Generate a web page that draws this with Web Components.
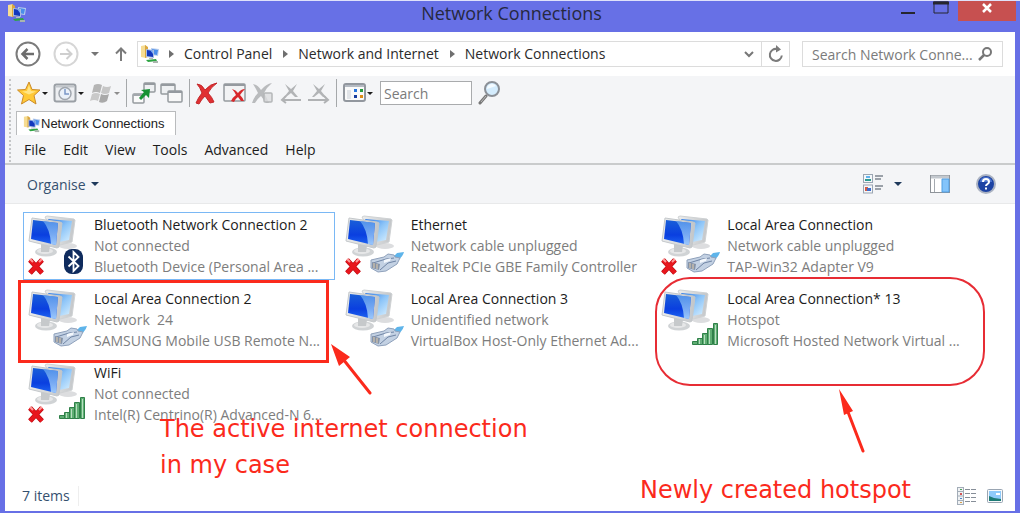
<!DOCTYPE html>
<html lang="en">
<head>
<meta charset="utf-8">
<title>Network Connections</title>
<style>
  html, body { margin: 0; }
  body { font-family: "Open Sans", "Noto Sans", sans-serif; font-size: 14px; color: #1c1c1c; background: #6770e6; }
</style>
</head>
<body>
<explorer-window></explorer-window>
<script>
const svg = (w, h, body, vb) => `<svg width="${w}" height="${h}" viewBox="${vb || `0 0 ${w} ${h}`}" aria-hidden="true">${body}</svg>`;

const ICON = {
  net: svg(20, 20, `
    <path d="M1 2l5-1v13l-5-1z" fill="#f6dc92"/><path d="M5 1l3 2v10l-3 1z" fill="#d9a63f"/>
    <path d="M11 4l8 1-1 7-7-1z" fill="#b9cdec"/><path d="M12 5l6 1-1 5-5-1z" fill="#4a8eea"/>
    <path d="M6 5l8 1v8l-8-1z" fill="#a9bde0"/><path d="M7 6l6 1v6l-6-1z" fill="#1238bd"/><path d="M10 6l3 1v3z" fill="#7eb0f5"/>
    <path d="M9 14h4v1H9z" fill="#b5bac0"/><path d="M6 16l10-1 1 2-9 1z" fill="#2fa544"/><path d="M13 17h5v2h-5z" fill="#a9b5ad"/>`),
  back: svg(26, 26, `<circle cx="13" cy="13" r="11.500" fill="none" stroke="#7b7b7b" stroke-width="2"/><path d="M19 13H8M12.500 8l-5 5 5 5" fill="none" stroke="#6d6d6d" stroke-width="2.500"/>`),
  forward: svg(26, 26, `<circle cx="13" cy="13" r="11.500" fill="none" stroke="#d6d6d6" stroke-width="2"/><path d="M7 13h11M13.500 8l5 5-5 5" fill="none" stroke="#cfcfcf" stroke-width="2"/>`),
  caret: svg(8, 8, `<path d="M0 2h8L4 6z" fill="currentColor"/>`),
  smallCaret: svg(8, 24, `<path d="M1 11h6l-3 3z" fill="currentColor"/>`),
  up: svg(20, 20, `<path d="M10 17V5M5 9.500l5-5 5 5" fill="none" stroke="#7b7b7b" stroke-width="2"/>`),
  right: svg(8, 12, `<path d="M2 2l5 4-5 4z" fill="#6f6f6f"/>`),
  chevron: svg(12, 12, `<path d="M2 4l4 4 4-4" fill="none" stroke="#777" stroke-width="2"/>`),
  refresh: svg(18, 18, `<path d="M14.800 10.500A6 6 0 1 1 10 4" fill="none" stroke="#7b7b7b" stroke-width="2"/><path d="M9 0l5 4.500-5 3z" fill="#7b7b7b"/>`),
  find: svg(16, 16, `<circle cx="10" cy="6" r="4" fill="none" stroke="#777" stroke-width="2"/><path d="M7 9l-5 5" stroke="#777" stroke-width="2.500"/>`),
  star: svg(24, 24, `<path d="M12 1l3 7.500 8 .5-6 5.500 2 8.500-7-4.500L4.500 23l2-8.500L.5 9l8-.5z" fill="#ffc936" stroke="#cc8b28" stroke-linejoin="round"/><path d="M12 4l2 6 5 .5-7 3-7-3 5-.5z" fill="#ffe586"/>`),
  clock: svg(24, 24, `<rect x="1.500" y="3.500" width="21" height="17" rx="2" fill="#eceef1" stroke="#9a9fa5" stroke-width="2"/><path d="M3 5.500h18" stroke="#c2c6cb" stroke-width="2"/><circle cx="12" cy="12.500" r="6" fill="#eaf1fa" stroke="#a0a6ae" stroke-width="1.500"/><path d="M12 8v5h4" fill="none" stroke="#7a97c8" stroke-width="1.500"/>`),
  flag: svg(24, 24, `<path d="M5 4q4-2 8 0l-2 8q-4-2-8 0z" fill="#b5b5b5"/><path d="M14 5q4 2 8 0l-2 7q-4 2-8 0z" fill="#c6c6c6"/><path d="M3 13q4-2 8 0l-2 7q-4-2-8 0z" fill="#c9c9c9"/><path d="M12 13q4 2 8 0l-2 7q-4 3-8 1z" fill="#a9a9a9"/>`),
  openWin: svg(24, 24, `<rect x="12" y="2" width="11" height="9" rx="1" fill="#eef0f2" stroke="#959a9f" stroke-width="1.500"/><path d="M12 3h11" stroke="#959a9f" stroke-width="2"/><rect x="1" y="13" width="11" height="9" rx="1" fill="#fafafa" stroke="#959a9f" stroke-width="1.500"/><path d="M1 14h11" stroke="#a3a8ad" stroke-width="2"/><path d="M7 17l5-6-3-2 9-1-1 9-3-3-5 5z" fill="#169232"/>`),
  windows: svg(24, 24, `<rect x="1" y="3" width="14" height="10" rx="1" fill="#eef0f2" stroke="#959a9f" stroke-width="1.500"/><path d="M1 4h14" stroke="#959a9f" stroke-width="2"/><rect x="8" y="10" width="14" height="11" rx="1" fill="#f8f8f8" stroke="#959a9f" stroke-width="1.500"/><path d="M8 11h14" stroke="#959a9f" stroke-width="2"/>`),
  cross: svg(24, 24, `<path d="M2 3q5 0 8 6 5-6 12-7-6 4-9 10 4 4 6 9l-4 1-5-7q-4 4-6 8l-3-1q2-5 6-10Q5 6 2 3z" fill="#e03032" stroke="#c3272a"/>`),
  winCross: svg(24, 24, `<rect x="1" y="3" width="21" height="17" rx="1" fill="#f2f3f4" stroke="#959a9f" stroke-width="1.500"/><path d="M1 4h21" stroke="#959a9f" stroke-width="2"/><path d="M9 8q4 1 6 4 3-4 7-4-3 3-5 6 3 3 4 6h-3l-3-4q-3 2-4 5l-3-1q2-4 5-6-2-4-4-6z" fill="#d8282b"/>`),
  grayCross: svg(24, 24, `<path d="M2 3q5 1 8 6 5-6 11-7-5 4-8 10 3 5 5 10h-3l-5-7q-4 3-6 7H1q2-6 6-10Q4 6 2 3z" fill="#b9bbbd"/><rect x="13" y="12" width="8" height="9" rx="1" fill="#dcdddf" fill-opacity=".8" stroke="#b4b6b8" stroke-width="1.500"/>`),
  crossLeft: svg(24, 24, `<path d="M6 3l6 5 6-5-4 7 5 6h-3l-4-4-5 4H5l5-6z" fill="#b2b4b6"/><path d="M22 19H3M7 15l-4 4 4 3" fill="none" stroke="#b0b2b4" stroke-width="2"/>`),
  crossRight: svg(24, 24, `<path d="M6 3l6 5 6-5-4 7 5 6h-3l-4-4-5 4H5l5-6z" fill="#b2b4b6"/><path d="M1 19h20M17 15l4 4-4 3" fill="none" stroke="#b0b2b4" stroke-width="2"/>`),
  panel: svg(24, 24, `<rect x="2" y="3" width="21" height="17" rx="2" fill="#fafafa" stroke="#92979e" stroke-width="2"/><path d="M3 5h19" stroke="#b4bac2" stroke-width="2"/><path d="M5 9h4v9H5z" fill="#e1e4e8"/><path d="M12 8h3v3h-3z" fill="#2674dd"/><path d="M18 8h3v3h-3z" fill="#239a3b"/><path d="M12 14h3v3h-3z" fill="#173d9e"/><path d="M18 14h3v3h-3z" fill="#dc8c18"/>`),
  lens: svg(24, 24, `<path d="M8 15l-6 7" stroke="#777" stroke-width="3" stroke-linecap="round"/><path d="M8 15l-5 6" stroke="#b9b9b9"/><circle cx="14" cy="8" r="7" fill="#d4ecfd" stroke="#8b9097" stroke-width="2"/><path d="M9 8a5 5 0 0 1 9-3z" fill="#f4fbff"/>`),
  view: svg(20, 20, `<rect x=".5" y=".5" width="9" height="8" fill="#f4f7fa" stroke="#9ba6b3"/><path d="M2 5h6v2H2z" fill="#2d9b90"/><path d="M3 2h4v2H3z" fill="#62b3ed"/><rect x=".5" y="11" width="9" height="8" fill="#f4f7fa" stroke="#9ba6b3"/><path d="M2 13h3v4H2z" fill="#d35b45"/><path d="M4 14h4v3H4z" fill="#3e6dcc"/><path d="M12 2h8M12 5h6M12 12h8M12 15h6" stroke="#7d8590" stroke-width="1.500"/>`),
  pane: svg(20, 18, `<rect x=".5" y=".5" width="19" height="17" fill="#fff" stroke="#8e9399"/><path d="M1 2h18" stroke="#c3c8ce" stroke-width="3"/><path d="M4.500 4v13" stroke="#a5aab0"/><path d="M12 4h7v13h-7z" fill="#83c4fb" stroke="#519ee2"/>`),
  help: svg(20, 20, `<circle cx="10" cy="10" r="9" fill="#1d43a3" stroke="#aab2c2" stroke-width="2"/><path d="M4 8a6 5 0 0 1 12 0z" fill="#4f77d0"/><path d="M7 8c0-4 6-4 6 0 0 2-3 2-3 4M10 13.500v2" fill="none" stroke="#fff" stroke-width="2"/>`),
  details: svg(20, 18, `<rect x=".5" y=".5" width="6" height="17" fill="#f0f2f4" stroke="#a3adb8"/><path d="M1 4.500h5M1 9h5M1 13.500h5" stroke="#a3adb8"/><path d="M3 2h2v1H3z" fill="#4b9c59"/><path d="M3 6h2v2H3z" fill="#d25555"/><path d="M3 11h2v1H3z" fill="#4c83cc"/><path d="M3 15h2v1H3z" fill="#d69d4a"/><path d="M8 2.500h12M8 6.500h12M8 10.500h12M8 14.500h12" stroke="#868e98" stroke-dasharray="5 1"/>`),
  picture: svg(16, 14, `<rect x=".5" y=".5" width="15" height="13" rx="1" fill="#f7f9fb" stroke="#99a5b2"/><path d="M2 2h12v10H2z" fill="#8fcafa"/><path d="M2 7l5 2 7 1v2H2z" fill="#1d7b75"/><path d="M9 4h4v2H9z" fill="#fff"/>`),
  min: svg(14, 14, `<path d="M0 12h14" stroke="#26262e" stroke-width="2"/>`),
  max: svg(16, 14, `<path d="M1 1h14v11H1z" fill="none" stroke="#26262e"/><path d="M0 2h16" stroke="#26262e" stroke-width="3"/>`),
  close: svg(12, 10, `<path d="M2 1l8 8M10 1L2 9" stroke="#fff" stroke-width="2.500"/>`)
};

const BADGE = {
  off: `<path d="M3 46l12 13M15 46L3 59" stroke="#b80b12" stroke-width="5"/><path d="M3 46l12 13M15 46L3 59" stroke="#e8161d" stroke-width="4"/><path d="M3 45l3 3M15 45l-3 3" stroke="#f99" stroke-width="2"/>`,
  bluetooth: `<rect x="37" y="35" width="19" height="25" rx="8" fill="#0f2b5d"/><path d="M41.500 42.500l10 9.500-5 5V38l5 5-10 9.500" fill="none" stroke="#fff" stroke-width="1.800"/>`,
  cable: `<path d="M46 44q5-2 7-5l7-1q-2 7-9 9z" fill="#5eb4ea"/><path d="M27 46l13-3 4-3 6 1 1 2 5 1-3 6-11 7-8 1-7-4z" fill="#c3d1e3" stroke="#8fa1bb"/><path d="M29 49l13-4 8-1M36 56l8-7 8-2" fill="none" stroke="#7085a5"/><path d="M28 48l8 2-1 6-7-2z" fill="#8593a8"/><path d="M30 49v5M33 50v5" stroke="#e4cfae"/><path d="M40 46l7-2-1 3-6 2z" fill="#f4f8fd"/>`,
  signal: `<g fill="#5fae73" stroke="#2f8049"><path d="M32.500 53.500h5v3h-5zM37.500 50.500h5v6h-5zM42.500 45.500h5v11h-5zM47.500 40.500h5v16h-5zM53.500 35.500h4v21h-4z"/></g><path d="M39 51h1v5h-1zM44 47h1v9h-1zM49 42h1v14h-1zM55 37h1v19h-1z" fill="#b8dfc1"/>`
};

const connectionIcon = badges => svg(60, 62, `
  <defs>
    <linearGradient id="front" x1="0" y1="0" x2="0" y2="1"><stop offset="0" stop-color="#1a5fd8"/><stop offset=".6" stop-color="#0a3fe0"/><stop offset="1" stop-color="#1f66f2"/></linearGradient>
    <linearGradient id="swoosh" x1="0" y1="0" x2="0" y2="1"><stop offset="0" stop-color="#5f9fee"/><stop offset="1" stop-color="#b9e0ff"/></linearGradient>
    <linearGradient id="rear" x1="0" y1="0" x2="1" y2="1"><stop offset="0" stop-color="#2a78e6"/><stop offset=".5" stop-color="#8cc4f8"/><stop offset="1" stop-color="#d8f0ff"/></linearGradient>
    <linearGradient id="frame"><stop offset="0" stop-color="#eceded"/><stop offset="1" stop-color="#c2c5c8"/></linearGradient>
  </defs>
  <ellipse cx="41" cy="32" rx="9" ry="3" fill="#dcdddf"/>
  <path d="M18 3l2-1 27 3 1 1-3 22-12 3z" fill="url(#frame)" stroke="#cfd2d4"/><path d="M21 5l24 2-3 19-10 2z" fill="url(#rear)"/>
  <ellipse cx="19" cy="38" rx="11" ry="4.500" fill="#d0d3d5"/><ellipse cx="18" cy="37" rx="8" ry="3" fill="#e6e7e8"/>
  <path d="M14 30l9 2-1 6h-8z" fill="#c6c9cb"/>
  <path d="M5 4l28 4 2 1-3 24-2 1-28-7z" fill="url(#frame)" stroke="#c4c8cb"/><path d="M6 6l25 3-2 22-25-6z" fill="url(#front)"/><path d="M16 7l15 2-2 22-5-1q-1-15-8-23z" fill="url(#swoosh)" fill-opacity=".8"/>
  ${badges.map(b => BADGE[b]).join("")}`);

class View extends HTMLElement {
  constructor() {
    super();
    this.attachShadow({ mode: "open" }).innerHTML = `<style>
      *, *::before { box-sizing: border-box; }
      svg { display: block; flex: none; }
      button { display: flex; align-items: center; justify-content: center; font: inherit; color: inherit; background: none; border: 0; padding: 0; margin: 0; flex: none; }
      a { color: inherit; text-decoration: none; white-space: nowrap; }
      input { font: inherit; color: inherit; min-width: 0; border: 0; padding: 0; background: none; outline: 0; }
      input::placeholder { color: #7b7b7b; opacity: 1; }
      ${this.css()}</style>${this.html()}`;
  }
  css() { return ""; }
  html() { return "<slot></slot>"; }
}

customElements.define("title-bar", class extends View {
  css() { return `
    :host { display: grid; grid-template-columns: 1fr auto 1fr; height: 32px; box-sizing: border-box; border-top: 1px solid #dfe1fa; background: #6770e6; padding: 0 4px 0 7px; align-items: start; }
    .app { padding-top: 2px; }
    h1 { margin: 0; font-size: 18px; line-height: 25px; font-weight: 400; color: #26283f; }
    .controls { display: flex; justify-content: flex-end; }
    .controls button { width: 33px; height: 14px; }
    .controls .close { width: 58px; height: 20px; background: #c75050; padding-bottom: 6px; margin-left: 1px; }`; }
  html() { return `<span class="app">${ICON.net}</span><h1><slot></slot></h1>
    <div class="controls"><button aria-label="Minimise">${ICON.min}</button><button aria-label="Maximise">${ICON.max}</button><button class="close" aria-label="Close">${ICON.close}</button></div>`; }
});

customElements.define("address-bar", class extends View {
  css() { return `
    :host { display: flex; align-items: center; height: 44px; padding: 0 12px 0 10px; background: #fff; }
    .forward { margin-left: 12px; } .history { width: 16px; margin: 0 8px; color: #757575; } .up { margin-right: 6px; }
    .path { display: flex; align-items: center; flex: 1; height: 26px; border: 1px solid #dcdcdc; padding-left: 2px; color: #2b2b2b; min-width: 0; line-height: 20px; }
    nav { display: flex; align-items: center; gap: 9px; flex: 1; padding-left: 7px; }
    .path .drop { width: 24px; } .path .refresh { width: 28px; height: 24px; border-left: 1px solid #dcdcdc; }
    .search { display: flex; align-items: center; width: 201px; height: 26px; border: 1px solid #dcdcdc; margin-left: 12px; padding: 0 9px; gap: 4px; }
    .search input { flex: 1; }`; }
  html() { return `<button aria-label="Back">${ICON.back}</button><button class="forward" aria-label="Forward">${ICON.forward}</button>
    <button class="history" aria-label="Recent locations">${ICON.caret}</button><button class="up" aria-label="Up">${ICON.up}</button>
    <div class="path">${ICON.net}<nav aria-label="Path">${ICON.right}<a href="#panel">Control Panel</a>${ICON.right}<a href="#internet">Network and Internet</a>${ICON.right}<a href="#connections">Network Connections</a></nav>
    <button class="drop" aria-label="Previous locations">${ICON.chevron}</button><button class="refresh" aria-label="Refresh">${ICON.refresh}</button></div>
    <div class="search"><input type="text" aria-label="Search Network Connections" placeholder="Search Network Conne..."><button aria-label="Search">${ICON.find}</button></div>`; }
});

customElements.define("tool-strip", class extends View {
  css() { return `
    :host { display: block; position: relative; background: #f4f5f7; border-bottom: 2px solid #c9cbcc; padding: 3px 12px 0; height: 89px; box-sizing: border-box; }
    :host::before { content: ""; position: absolute; left: 4px; top: 3px; bottom: 1px; border-left: 2px dotted #c4c6c8; }
    .tools, .group, .split { display: flex; align-items: center; }
    .tools { height: 28px; gap: 4px; } .group { gap: 4px; }
    .muted { color: #8d8d8d; }
    hr { width: 1px; height: 28px; margin: 0 1px; border: 0; background: #a5a8aa; }
    .tools input { width: 92px; height: 24px; background: #fff; border: 1px solid #a9abad; padding: 0 3px; margin: 0 2px; }
    .tab { display: flex; width: 160px; height: 24px; margin-top: 4px; margin-left: -1px; padding: 0 0 0 6px; border: 1px solid #b9bbbd; border-bottom: 0; background: #fff; font: 13px "Liberation Sans", Arial, sans-serif; align-items: center; justify-content: start; color: #222; }
    .tab svg { width: 18px; height: 18px; }
    nav { display: flex; gap: 17px; height: 28px; align-items: center; padding-left: 7px; }`; }
  html() {
    const b = (icon, label) => `<button aria-label="${label}">${ICON[icon]}</button>`;
    const s = (icon, label, cls = "") => `<div class="split ${cls}">${b(icon, label)}<button aria-label="${label} options">${ICON.smallCaret}</button></div>`;
    return `<div class="tools"><div class="group">${s("star", "Favourites")}${s("clock", "History")}${s("flag", "System", "muted")}</div><hr>
      <div class="group">${b("openWin", "Open in new window")}${b("windows", "Duplicate window")}</div><hr>
      <div class="group">${b("cross", "Close tab")}${b("winCross", "Close window")}${b("grayCross", "Close others")}${b("crossLeft", "Close left")}${b("crossRight", "Close right")}</div><hr>
      ${s("panel", "Layout")}<input type="text" aria-label="Search" placeholder="Search">${b("lens", "Find")}</div>
      <button class="tab">${ICON.net}Network Connections</button>
      <nav aria-label="Menu">${["File", "Edit", "View", "Tools", "Advanced", "Help"].map(m => `<button>${m}</button>`).join("")}</nav>`;
  }
});

customElements.define("command-bar", class extends View {
  css() { return `
    :host { display: flex; justify-content: space-between; align-items: center; height: 39px; box-sizing: border-box; padding: 0 19px 0 22px; background: #f4f5f7; border-bottom: 1px solid #e8e9ea; color: #35506f; }
    .organise { gap: 5px; } .right { display: flex; align-items: center; color: #1e395b; }
    .right .menu { width: 30px; } .right .pane { margin: 0 26px 0 17px; } .organise svg { color: #1e395b; }`; }
  html() { return `<button class="organise">Organise ${ICON.caret}</button><div class="right"><button aria-label="Change view">${ICON.view}</button><button class="menu" aria-label="View options">${ICON.caret}</button><button class="pane" aria-label="Preview pane">${ICON.pane}</button><button aria-label="Help">${ICON.help}</button></div>`; }
});

customElements.define("connection-item", class extends View {
  css() { return `
    :host { display: flex; gap: 7px; height: 68px; box-sizing: border-box; border: 1px solid transparent; padding: 1px 3px; margin-right: 5px; line-height: 21px; color: #7d7d7d; white-space: pre; }
    :host([selected]) { border-color: #7ab8f5; }
    .name { color: #1c1c1c; }`; }
  html() { return `${connectionIcon((this.getAttribute("badges") || "").split(" ").filter(Boolean))}<div class="text"><div class="name"><slot name="name"></slot></div><div><slot name="state"></slot></div><div><slot name="device"></slot></div></div>`; }
});

customElements.define("connection-list", class extends View {
  css() { return `
    :host { display: grid; grid-template-columns: repeat(3, 1fr); row-gap: 6px; align-content: start; padding: 8px 42px 0 18px; flex: 1; background: #fff; }`; }
  html() {
    return [
      ["Bluetooth Network Connection 2", "Not connected", "Bluetooth Device (Personal Area ...", "off bluetooth", "selected"],
      ["Ethernet", "Network cable unplugged", "Realtek PCIe GBE Family Controller", "off cable", ""],
      ["Local Area Connection", "Network cable unplugged", "TAP-Win32 Adapter V9", "off cable", ""],
      ["Local Area Connection 2", "Network  24", "SAMSUNG Mobile USB Remote N...", "cable", ""],
      ["Local Area Connection 3", "Unidentified network", "VirtualBox Host-Only Ethernet Ad...", "cable", ""],
      ["Local Area Connection* 13", "Hotspot", "Microsoft Hosted Network Virtual ...", "signal", ""],
      ["WiFi", "Not connected", "Intel(R) Centrino(R) Advanced-N 6...", "off signal", ""]
    ].map(([n, s, d, badges, sel]) => `<connection-item badges="${badges}" ${sel}><span slot="name">${n}</span><span slot="state">${s}</span><span slot="device">${d}</span></connection-item>`).join("");
  }
});

customElements.define("status-bar", class extends View {
  css() { return `
    :host { display: flex; justify-content: space-between; align-items: center; height: 30px; padding: 0 12px 0 17px; background: #fff; color: #35506f; }
    .count { padding-right: 8px; border-right: 1px solid #eee; line-height: 20px; } .views { display: flex; align-items: center; gap: 10px; }`; }
  html() { return `<span class="count"><slot></slot></span><div class="views"><button aria-label="Details view">${ICON.details}</button><button aria-label="Thumbnail view">${ICON.picture}</button></div>`; }
});

/* Red call-outs laid over the list of connections. */
customElements.define("callout-layer", class extends View {
  css() { return `
    :host { position: absolute; inset: 0; pointer-events: none; color: #fb2a1c; font: 24px/36px "DejaVu Sans", Verdana, sans-serif; }
    svg { position: absolute; left: 0; top: 0; overflow: visible; }
    p { position: absolute; margin: 0; white-space: nowrap; }
    .active { left: 160px; top: 411px; } .hotspot { left: 640px; top: 472px; }`; }
  html() { return `${svg(1020, 513, `
      <rect x="19.500" y="281.500" width="308" height="80" fill="none" stroke="#fb2a1c" stroke-width="3"/>
      <rect x="656" y="278" width="328" height="107" rx="34" fill="none" stroke="#e72c34" stroke-width="2"/>
      <g stroke="#fb2a1c" stroke-width="3" stroke-linecap="round"><path d="M343 359l27 34M848 412l15 39"/></g>
      <path d="M331 344l19 13-11 9zM839 389l14 22-9 4z" fill="#fb2a1c"/>`)}
    <p class="active">The active internet connection<br>in my case</p><p class="hotspot">Newly created hotspot</p>`; }
});

customElements.define("explorer-window", class extends View {
  css() { return `
    :host { display: flex; flex-direction: column; position: relative; min-height: 100vh; box-sizing: border-box; background: #6770e6; }
    main { display: flex; flex-direction: column; flex: 1; margin: 0 5px 2px; background: #fff; }`; }
  html() { return `<title-bar>Network Connections</title-bar><main><address-bar></address-bar><tool-strip></tool-strip><command-bar></command-bar><connection-list></connection-list><status-bar>7 items</status-bar></main><callout-layer></callout-layer>`; }
});
</script>
</body>
</html>
